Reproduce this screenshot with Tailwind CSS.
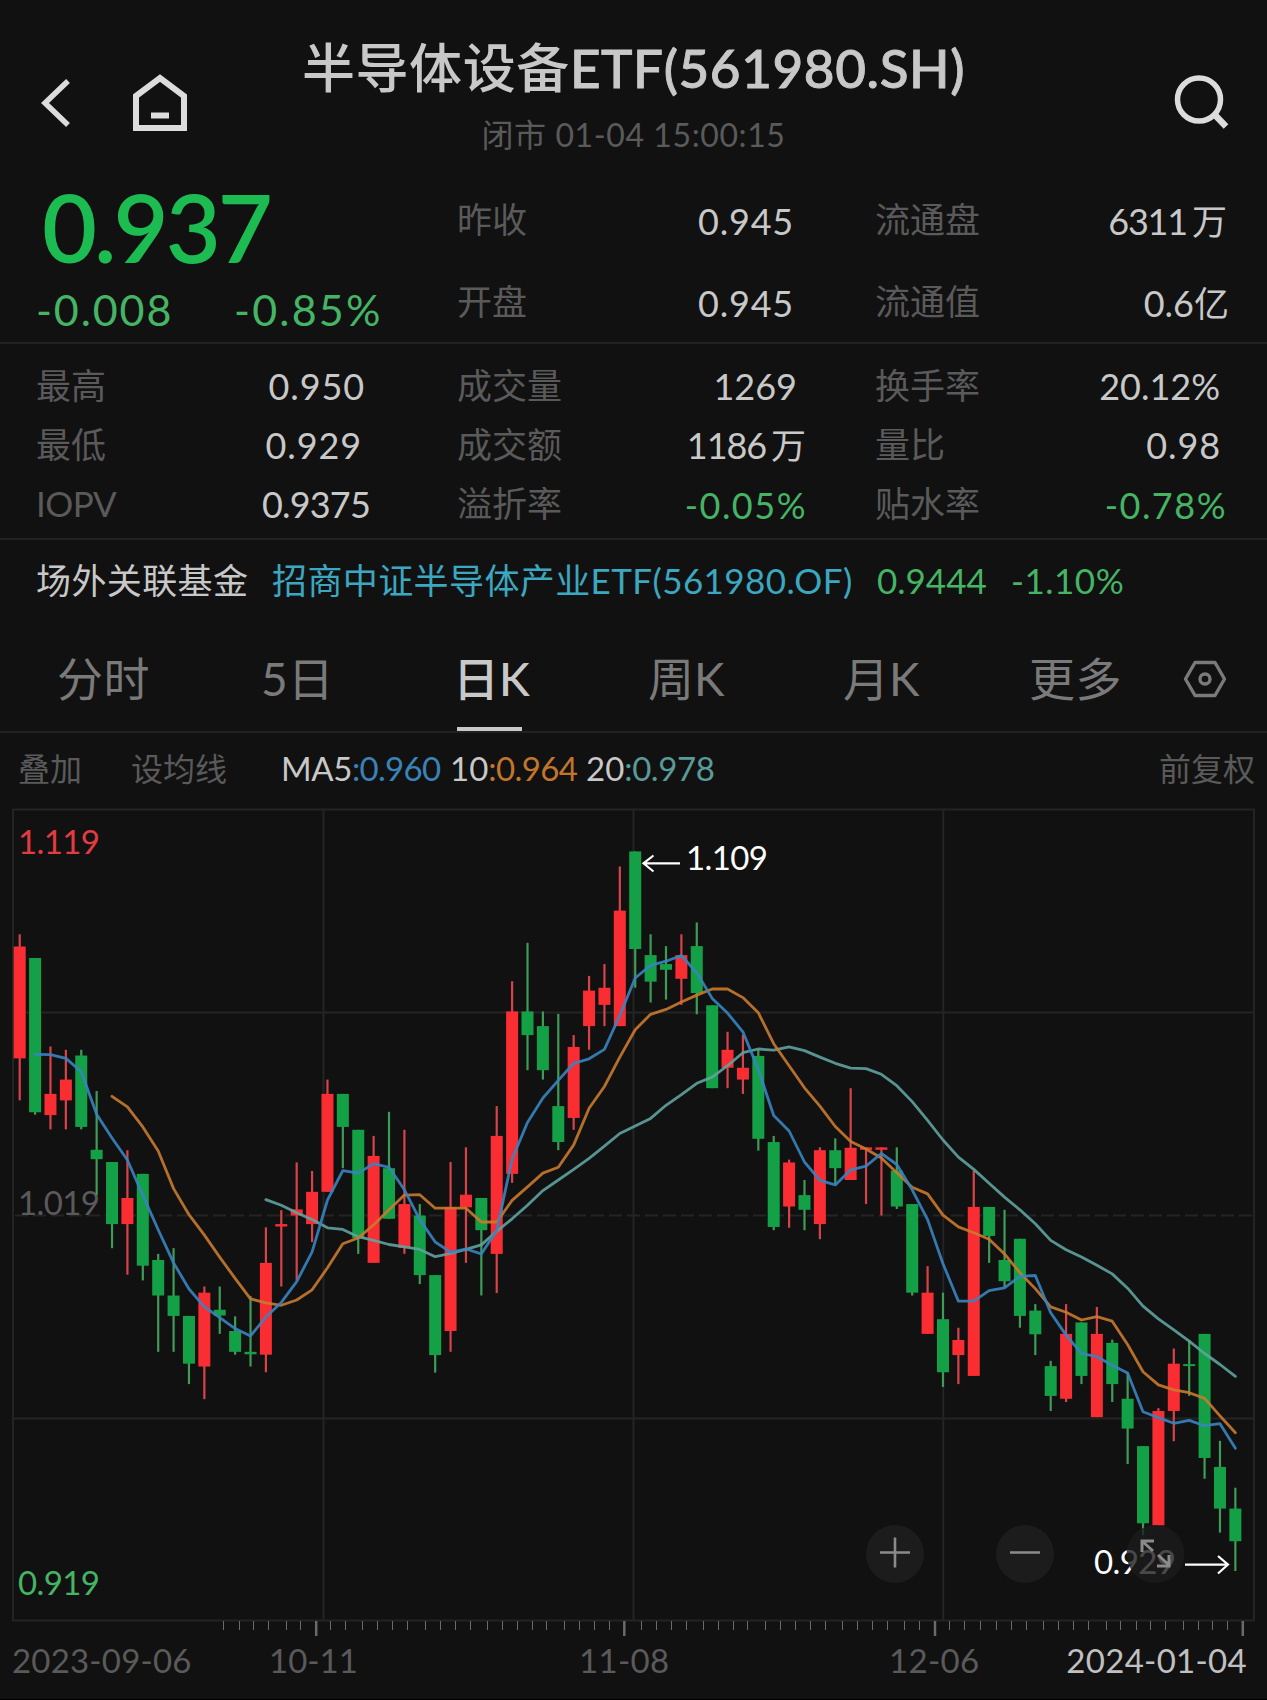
<!DOCTYPE html>
<html lang="zh-CN">
<head>
<meta charset="utf-8">
<title>半导体设备ETF(561980.SH)</title>
<script src="https://cdn.jsdelivr.net/npm/@tailwindcss/browser@4"></script>
</head>
<body class="bg-[#111111]">
<div class="w-[1267px] h-[1700px] overflow-hidden bg-[#111111] font-['Lato','Noto_Sans_CJK_SC',sans-serif] text-[#c8c8c8] border-b border-black whitespace-nowrap">

  <header class="h-[180px] flex justify-between">
    <div class="w-[280px] flex">
      <svg class="w-[280px] h-[180px]" viewBox="0 0 280 180" fill="none" stroke="#dcdcdc">
        <path d="M68 81 45 103 68 125" stroke-width="5.500"/>
        <path d="M136 96 160 78 184 96V128H136Z" stroke-width="6"/>
        <path d="M151 115.500H169" stroke-width="6"/>
      </svg>
    </div>
    <div class="flex flex-col items-center pt-[33px]">
      <h1 class="text-[53px] leading-[70px] font-medium tracking-[0.6px]">半导体设备<span class="[-webkit-text-stroke:0.9px_#c8c8c8]">ETF(561980.SH)</span></h1>
      <p class="text-[32px] leading-[64px] text-[#5a5a5a] tracking-[0.6px]">闭市 01-04 15:00:15</p>
    </div>
    <svg class="w-[280px] h-[180px]" viewBox="987 0 280 180" fill="none" stroke="#dcdcdc">
      <circle cx="1199" cy="99.500" r="21.500" stroke-width="5.500"/>
      <path d="M1215 115 1226 126.500" stroke-width="6.500"/>
    </svg>
  </header>

  <section class="h-[162px] flex">
    <div class="w-[457px]">
      <div class="h-[92px] leading-[92px] pl-[42px] text-[95px] font-semibold text-[#1dbc52] tracking-[-3px]">0.937</div>
      <div class="h-[70px] leading-[75px] text-[43px] text-[#45b565] flex">
        <span class="w-[198px] pl-[36px] tracking-[1.9px]">-0.008</span><span class="pl-[36px] tracking-[2.2px]">-0.85%</span>
      </div>
    </div>
    <div class="w-[418px] text-[36px] leading-[82px]">
      <div class="h-[82px] flex justify-between pr-[81px]"><span class="text-[35px] leading-[79px] text-[#5a5a5a]">昨收</span><span class="tracking-[0.8px]">0.945</span></div>
      <div class="h-[82px] flex justify-between pr-[81px]"><span class="text-[35px] leading-[79px] text-[#5a5a5a]">开盘</span><span class="tracking-[0.8px]">0.945</span></div>
    </div>
    <div class="w-[392px] text-[36px] leading-[82px]">
      <div class="h-[82px] flex justify-between pr-[40px]"><span class="text-[35px] leading-[79px] text-[#5a5a5a]">流通盘</span><span><span class="tracking-[-1.2px]">6311</span><span class="text-[35px] pl-[5px]">万</span></span></div>
      <div class="h-[82px] flex justify-between pr-[38px]"><span class="text-[35px] leading-[79px] text-[#5a5a5a]">流通值</span><span>0.6<span class="text-[35px]">亿</span></span></div>
    </div>
  </section>

  <section class="h-[198px] border-y-2 border-[#222222] pt-[13px] grid grid-cols-[457px_418px_392px] auto-rows-[59px] text-[36px] leading-[59px]">
    <div class="flex justify-between pl-[36px] pr-[92px]"><span class="text-[35px] leading-[57px] text-[#5a5a5a]">最高</span><span class="tracking-[0.9px]">0.950</span></div>
    <div class="flex justify-between pr-[78px]"><span class="text-[35px] leading-[57px] text-[#5a5a5a]">成交量</span><span>1269</span></div>
    <div class="flex justify-between pr-[47px]"><span class="text-[35px] leading-[57px] text-[#5a5a5a]">换手率</span><span>20.12%</span></div>
    <div class="flex justify-between pl-[36px] pr-[95px]"><span class="text-[35px] leading-[57px] text-[#5a5a5a]">最低</span><span class="tracking-[0.9px]">0.929</span></div>
    <div class="flex justify-between pr-[69px]"><span class="text-[35px] leading-[57px] text-[#5a5a5a]">成交额</span><span><span class="tracking-[-1.1px]">1186</span><span class="text-[35px] pl-[5px]">万</span></span></div>
    <div class="flex justify-between pr-[46px]"><span class="text-[35px] leading-[57px] text-[#5a5a5a]">量比</span><span class="tracking-[0.9px]">0.98</span></div>
    <div class="flex justify-between pl-[36px] pr-[87px]"><span class="text-[35px] leading-[57px] text-[#5a5a5a] tracking-[-0.5px]">IOPV</span><span class="tracking-[-0.8px]">0.9375</span></div>
    <div class="flex justify-between pr-[68px]"><span class="text-[35px] leading-[57px] text-[#5a5a5a]">溢折率</span><span class="text-[#45b565] tracking-[1.5px] leading-[61px]">-0.05%</span></div>
    <div class="flex justify-between pr-[40px]"><span class="text-[35px] leading-[57px] text-[#5a5a5a]">贴水率</span><span class="text-[#45b565] tracking-[1.5px] leading-[61px]">-0.78%</span></div>
  </section>

  <section class="h-[81px] leading-[80px] flex text-[35px]">
    <span class="w-[272px] pl-[36px] tracking-[0.4px]">场外关联基金</span>
    <span class="w-[605px] text-[#3ba7c0] tracking-[0.4px]">招商中证半导体产业ETF(561980.OF)</span>
    <span class="w-[134px] text-[#45b565]">0.9444</span>
    <span class="text-[#45b565] tracking-[0.5px]">-1.10%</span>
  </section>

  <nav class="h-[112px] border-b-2 border-[#222222] leading-[115px] text-[46px] text-[#7a7a7a] flex">
    <span class="w-[204px] pl-[57px] tracking-[0.5px]">分时</span>
    <span class="w-[252px] pl-[57px]">5日</span>
    <span class="w-[192px] relative text-[#c8c8c8] font-medium -indent-[3px]">日K<i class="absolute left-px top-[106px] w-[65px] h-[4px] bg-[#c8c8c8]"></i></span>
    <span class="w-[195px]">周K</span>
    <span class="w-[186px]">月K</span>
    <span class="w-[154px] tracking-[0.5px]">更多</span>
    <svg class="w-[44px] h-[110px]" viewBox="0 0 44 110" fill="none" stroke="#7a7a7a" stroke-width="3.400">
      <path d="M12 41.500H32L41.500 58 32 74.500H12L2.500 58Z" stroke-linejoin="round"/><circle cx="22" cy="58" r="5"/>
    </svg>
  </nav>

  <section class="h-[67px] leading-[71px] text-[32px] text-[#5a5a5a] flex">
    <span class="w-[112px] pl-[18px]">叠加</span>
    <span class="w-[169px] pl-[19px]">设均线</span>
    <span class="w-[169px] text-[33px] text-[#c8c8c8] tracking-[-0.4px]">MA5<span class="text-[#3a83b8] tracking-[-0.7px]">:0.960</span></span>
    <span class="w-[136px] text-[33px] text-[#c8c8c8]">10<span class="text-[#c2762c] tracking-[-0.6px]">:0.964</span></span>
    <span class="text-[33px] text-[#c8c8c8]">20<span class="text-[#5a9a98] tracking-[-0.4px]">:0.978</span></span>
    <span class="ml-auto pr-[12px]">前复权</span>
  </section>

  <svg id="chart" class="w-[1267px] h-[840px] block" viewBox="0 0 1267 840" font-size="33">
    <g stroke="#242424" stroke-width="2" fill="none">
      <path d="M13 9.400H1254V820.500H13Z"/>
      <path d="M13 212.500H1254M13 618.500H1254M323.500 9V820M633.500 9V820M943.300 9V820"/>
      <path d="M15 415.500H1254" stroke-dasharray="13 5"/>
    </g>
    <text x="18" y="415" fill="#5a5a5a" textLength="82">1.019</text>
    <g id="candles"></g>
    <g id="averages" fill="none" stroke-width="2.800" stroke-linejoin="round" stroke-linecap="round"></g>
    <text x="18" y="53.500" fill="#e23c41" textLength="82">1.119</text>
    <text x="18" y="794.500" fill="#45b565" textLength="82">0.919</text>
    <g fill="none" stroke="#fff" stroke-width="2.200">
      <path d="M680 63.300H643M653.500 55.500 643.500 63.300 653.500 71.500"/>
      <path d="M1185 764.600H1228M1218 756 1228 764.600 1218 773.500"/>
    </g>
    <text x="686" y="70" fill="#fff" textLength="82">1.109</text>
    <text x="1094" y="774" fill="#fff" textLength="82">0.929</text>
    <g fill="#1c1c1c">
      <circle cx="895" cy="754" r="29"/><circle cx="1025" cy="754" r="29"/><circle cx="1155.500" cy="754" r="29" fill-opacity=".8"/>
    </g>
    <g stroke="#8a8a8a" stroke-width="2.600" fill="none">
      <path d="M880 752.500H910M895 737.500V767.500M1010 752.500H1040"/>
      <path stroke-width="3" d="M1142 752V741H1154M1142 741 1153 751M1158 755 1169 765M1157 766H1169V755"/>
    </g>
    <g id="ticks" stroke="#6a6a6a"></g>
  </svg>

  <footer class="h-[59px] leading-[40px] text-[33px] text-[#5a5a5a] flex">
    <span class="w-[269px] pl-[12px] tracking-[0.2px]">2023-09-06</span>
    <span class="w-[310px]">10-11</span>
    <span class="w-[310px] tracking-[0.3px]">11-08</span>
    <span class="tracking-[0.3px]">12-06</span>
    <span class="ml-auto pr-[20px] tracking-[0.3px] text-[#c0c0c0]">2024-01-04</span>
  </footer>
</div>

<script>
const NS = 'http://www.w3.org/2000/svg';
const px = i => 19.7 + i * 15.388;
const py = v => v / 2.45;
function add(parent, name, attrs) {
  const el = document.createElementNS(NS, name);
  for (const k in attrs) el.setAttribute(k, attrs[k]);
  document.getElementById(parent).appendChild(el);
}
// direction, wick top, body top, body bottom, wick bottom
const candles = `R 329 359 633 736|G 387 387 765 771|R 604 720 772 807|R 612 685 736 807|G 612 626 801 807|G 713 857 880 968|G 887 887 1039 1098|R 858 975 1039 1163|G 916 916 1141 1177|G 1112 1127 1214 1352|G 1098 1214 1264 1352|G 1264 1264 1381 1431|R 1192 1207 1388 1468|G 1192 1249 1263 1308|G 1265 1301 1352 1359|G 1215 1352 1358 1388|R 1047 1134 1359 1402|R 1005 1039 1045 1192|R 888 1003 1018 1177|R 909 960 1039 1083|R 685 720 960 960|G 720 720 801 902|G 808 808 1074 1112|R 823 872 1134 1134|G 764 902 1026 1026|R 808 990 1097 1112|G 990 1018 1164 1186|G 1164 1164 1360 1403|R 887 998 1301 1352|R 851 967 998 1134|G 975 975 1054 1214|R 750 823 1112 1208|R 444 518 916 938|G 350 518 576 662|G 518 554 662 685|G 524 750 838 858|R 576 605 779 808|R 431 467 554 612|R 402 460 502 554|R 163 271 554 554|G 126 126 365 460|G 329 380 445 496|G 358 402 416 489|R 329 380 438 502|G 300 358 473 525|G 503 503 706 706|R 568 612 656 706|R 575 656 685 720|G 612 627 830 859|G 823 838 1046 1054|R 881 888 996 1048|G 931 968 1004 1054|R 851 858 1039 1076|G 829 858 902 940|R 706 852 931 931|R 851 851 857 990|R 851 851 857 1018|G 851 908 996 1002|G 990 990 1207 1214|R 1142 1207 1308 1308|G 1207 1272 1402 1438|R 1293 1323 1360 1431|R 908 997 1411 1411|G 997 997 1068 1134|G 1004 1127 1179 1193|G 1075 1075 1264 1293|G 1235 1251 1309 1360|G 1374 1387 1460 1497|R 1235 1308 1467 1475|G 1280 1280 1411 1431|R 1242 1308 1512 1512|G 1322 1330 1431 1475|G 1403 1467 1540 1627|G 1583 1583 1772 1801|R 1490 1497 1777 1777|R 1344 1381 1497 1571|G 1324 1382 1387 1460|G 1308 1308 1612 1663|G 1570 1634 1736 1795|G 1685 1736 1816 1889`.split('|');
candles.forEach((c, i) => {
  const [d, h, t, b, l] = c.split(' ');
  const x = px(i), up = d === 'R';
  add('candles', 'rect', {x: x - 1.1, y: py(h), width: 2.2, height: py(l - h), fill: up ? '#d8434a' : '#3f9c57'});
  add('candles', 'rect', {x: x - 6, y: py(t), width: 12, height: py(b - t), fill: up ? '#f92d32' : '#14a046'});
});
function line(start, values, stroke) {
  add('averages', 'polyline', {points: values.map((v, i) => px(start + i).toFixed(1) + ',' + py(v).toFixed(1)).join(' '), stroke, 'stroke-opacity': .9});
}
line(16, [979,993,1011,1028,1048,1052,1070,1079,1089,1095,1101,1119,1111,1101,1090,1057,1026,993,957,931,905,878,848,817,799,780,748,722,694,679,651,619,610,613,605,614,630,645,657,658,672,700,739,785,833,875,905,939,973,1004,1038,1079,1102,1120,1140,1161,1196,1240,1271,1298,1326,1356,1383,1412], '#5fa3a0');
line(6, [726,752,801,860,952,1016,1066,1120,1172,1222,1232,1238,1225,1200,1146,1087,1073,1041,1004,968,967,1000,1000,1000,1034,1034,981,948,914,900,845,755,702,630,563,525,513,495,478,463,463,484,521,597,651,705,750,800,837,855,877,913,949,965,1017,1046,1060,1076,1112,1158,1197,1242,1255,1274,1266,1277,1334,1401,1433,1445,1452,1466,1509,1550], '#c97a2e');
line(1, [623,624,633,666,770,828,882,968,1053,1134,1198,1242,1268,1295,1313,1267,1231,1180,1107,980,908,914,891,900,955,1028,1083,1108,1100,1112,1055,880,790,730,687,645,634,611,528,436,405,395,381,423,486,522,568,660,773,811,887,932,943,906,897,866,893,955,1028,1136,1228,1228,1202,1195,1167,1165,1256,1311,1356,1364,1385,1404,1499,1513,1527,1520,1533,1528,1588], '#3784c0');

[223,238.600,253,267.700,285.500,300.400,330,345,362.300,377.300,392.200,406.800,425,439.500,454.500,469.500,487,501.800,516.800,531.700,546.300,564,578.600,593.600,608.600,640.700,655.600,670.600,685.600,703.400,718,732.500,747.400,765.200,779.800,795,809.700,824.700,842,857,872,886.500,904.300,919.300,948.800,963.800,979.500,996,1011,1025.600,1043,1058.400,1073.300,1088,1105.700,1120.200,1135.600,1150.200,1164.700,1182.500,1197.500,1211.600,1227]
  .forEach(x => add('ticks', 'path', {d: `M${Math.round(x) + .5} 821V830`, 'stroke-width': 1}));
[316.200,624.300,935,1242.800].forEach(x => add('ticks', 'path', {d: `M${x} 821V836`, 'stroke-width': 2.5}));
</script>
</body>
</html>
